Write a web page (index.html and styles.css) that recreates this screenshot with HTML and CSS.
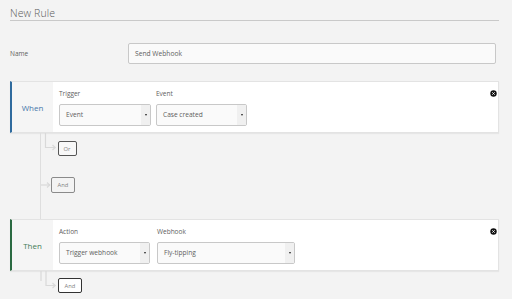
FILE: index.html
```html
<!DOCTYPE html>
<html>
<head>
<meta charset="utf-8">
<link rel="stylesheet" href="styles.css">
</head>
<body>
<div class="page">
  <div class="title">New Rule</div>
  <div class="name-row">
    <div class="name-label">Name</div>
    <div class="input">Send Webhook</div>
  </div>

  <div class="panel when">
    <div class="panel-label">When</div>
    <div class="panel-body">
      <div class="field">
        <div class="flabel">Trigger</div>
        <div class="select w92"><span class="stext">Event</span><span class="sarrow"><i class="tri"></i></span></div>
      </div>
      <div class="field">
        <div class="flabel">Event</div>
        <div class="select w91"><span class="stext">Case created</span><span class="sarrow"><i class="tri"></i></span></div>
      </div>
      <svg class="close" width="7" height="7" viewBox="0 0 7 7"><circle cx="3.5" cy="3.5" r="3.2" fill="#111"/><path d="M2.3 2.3 L4.7 4.7 M4.7 2.3 L2.3 4.7" stroke="#fff" stroke-width="0.9"/></svg>
    </div>
  </div>

  <div class="connector">
    <div class="or-row">
      <svg class="branch" width="16" height="18" viewBox="0 0 16 18"><path d="M4.5 0 V14.5 H14" fill="none" stroke="#d9d9d9" stroke-width="1.2"/><path d="M11.5 12 L14.2 14.5 L11.5 17" fill="none" stroke="#d9d9d9" stroke-width="1.2"/></svg>
      <div class="btn btn-or">Or</div>
    </div>
    <div class="and-row">
      <svg class="arrow" width="10" height="16" viewBox="0 0 10 16"><path d="M0 8 H8.5" fill="none" stroke="#d9d9d9" stroke-width="1.2"/><path d="M6 5.5 L8.7 8 L6 10.5" fill="none" stroke="#d9d9d9" stroke-width="1.2"/></svg>
      <div class="btn btn-and">And</div>
    </div>
  </div>

  <div class="panel then">
    <div class="panel-label">Then</div>
    <div class="panel-body">
      <div class="field">
        <div class="flabel">Action</div>
        <div class="select w90"><span class="stext">Trigger webhook</span><span class="sarrow"><i class="tri"></i></span></div>
      </div>
      <div class="field">
        <div class="flabel">Webhook</div>
        <div class="select w138"><span class="stext">Fly-tipping</span><span class="sarrow"><i class="tri"></i></span></div>
      </div>
      <svg class="close" width="7" height="7" viewBox="0 0 7 7"><circle cx="3.5" cy="3.5" r="3.2" fill="#111"/><path d="M2.3 2.3 L4.7 4.7 M4.7 2.3 L2.3 4.7" stroke="#fff" stroke-width="0.9"/></svg>
    </div>
  </div>

  <div class="bottom-row">
    <svg class="branch2" width="18" height="22" viewBox="0 0 18 22"><path d="M1 0 V10" fill="none" stroke="#d9d9d9" stroke-width="1.2"/><path d="M6 0 V14.5 H15" fill="none" stroke="#d9d9d9" stroke-width="1.2"/><path d="M12.5 12 L15.2 14.5 L12.5 17" fill="none" stroke="#d9d9d9" stroke-width="1.2"/></svg>
    <div class="btn btn-and2">And</div>
  </div>
</div>
</body>
</html>
```

FILE: styles.css
```css
html, body {
  margin: 0;
  padding: 0;
  background: #f3f3f3;
  font-family: "Open Sans", "Liberation Sans", sans-serif;
  color: #606060;
}
.page {
  padding: 0 13px 0 10px;
}
.title {
  padding-top: 7px;
  font-size: 10.5px;
  line-height: 13px;
  height: 13px;
  color: #5a5a5a;
  font-weight: 300;
  letter-spacing: 0.1px;
  border-bottom: 1px solid #c9c9c9;
}
.name-row {
  display: flex;
  align-items: center;
  margin-top: 22px;
  height: 21px;
}
.name-label {
  width: 118px;
  font-size: 6.5px;
  color: #606060;
}
.input {
  box-sizing: border-box;
  width: 368px;
  height: 21px;
  background: #fafafa;
  border: 1px solid #c8c8c8;
  border-radius: 2px;
  font-size: 6.7px;
  line-height: 19px;
  padding-left: 6px;
  color: #606060;
}
.panel {
  box-sizing: border-box;
  display: flex;
  height: 52px;
  margin-top: 17px;
  background: #fff;
  border: 1px solid #e3e3e3;
  box-shadow: 0 1px 1px rgba(0,0,0,0.05);
}
.panel.when { border-left: 2px solid #2f6b9e; }
.panel.then { border-left: 2px solid #2b6a42; margin-top: 0; }
.panel-label {
  width: 41px;
  background: #f5f5f5;
  display: flex;
  align-items: center;
  justify-content: center;
  font-size: 8px;
}
.when .panel-label { color: #4677aa; }
.then .panel-label { color: #457d58; }
.panel-body {
  flex: 1;
  display: flex;
  gap: 5px;
  padding: 7px 1px 6px 6px;
}
.field {
  display: flex;
  flex-direction: column;
  gap: 5px;
}
.flabel {
  font-size: 6.5px;
  line-height: 10px;
  height: 10px;
  color: #606060;
}
.select {
  box-sizing: border-box;
  height: 22px;
  display: flex;
  background: #fafafa;
  border: 1px solid #c8c8c8;
  border-radius: 2px;
  font-size: 6.6px;
  color: #606060;
}
.w92 { width: 92px; }
.w91 { width: 91px; }
.w90 { width: 91px; margin-right: 2px; }
.w138 { width: 138px; }
.stext {
  flex: 1;
  line-height: 20px;
  padding-left: 6px;
  white-space: nowrap;
}
.sarrow {
  width: 9px;
  background: #f0f0f0;
  display: flex;
  align-items: center;
  justify-content: center;
}
.tri {
  width: 0;
  height: 0;
  border-left: 1.5px solid transparent;
  border-right: 1.5px solid transparent;
  border-top: 2px solid #222;
}
.close {
  margin-left: auto;
  margin-top: 1px;
  flex: none;
}
.connector {
  box-sizing: border-box;
  margin-left: 30px;
  border-left: 1.5px solid #dedede;
  height: 86px;
  display: flex;
  flex-direction: column;
}
.or-row {
  display: flex;
  align-items: flex-start;
}
.branch { flex: none; }
.btn {
  box-sizing: border-box;
  font-size: 5.8px;
  display: flex;
  align-items: center;
  justify-content: center;
  border-radius: 2px;
  color: #808080;
}
.btn-or {
  width: 19px;
  height: 15px;
  margin-top: 8px;
  margin-left: 0.5px;
  border: 1px solid #555;
  background: #f8f8f8;
}
.and-row {
  display: flex;
  align-items: center;
  margin-top: 21px;
}
.arrow { flex: none; }
.btn-and {
  width: 24px;
  height: 16px;
  border: 1px solid #8a8a8a;
  background: #f3f3f3;
}
.bottom-row {
  display: flex;
  align-items: flex-start;
  margin-left: 30px;
}
.branch2 { flex: none; }
.btn-and2 {
  width: 24px;
  height: 15px;
  margin-top: 7px;
  margin-left: 0;
  border: 1px solid #333;
  background: #fff;
}
```
